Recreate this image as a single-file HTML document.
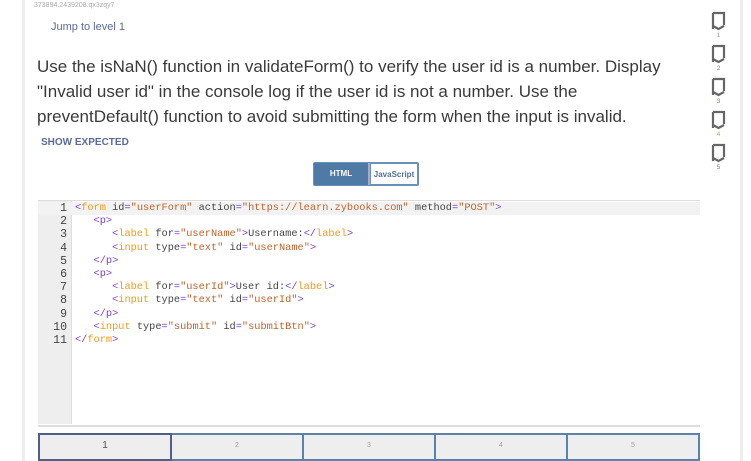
<!DOCTYPE html>
<html><head><style>
body{margin:0;width:751px;height:461px;overflow:hidden;background:#fff;font-family:"Liberation Sans",sans-serif;position:relative}
.a{position:absolute}
.code{font-family:"Liberation Mono",monospace;font-size:10.3px;white-space:pre;color:#444}
.t{color:#7a3fd1}.k{color:#f29a1a}.s{color:#c0622a}
.ln{position:absolute;left:36px;width:31px;text-align:right;font-family:"Liberation Mono",monospace;font-size:11.5px;color:#444}
</style></head><body>
<div class="a" style="left:22px;top:0;width:3px;height:461px;background:#eee"></div>
<div class="a" style="left:740px;top:0;width:3px;height:461px;background:#eee"></div>
<div class="a" style="left:34px;top:2px;font-size:7px;color:#aaa">373894.2439208.qx3zqy7</div>
<div class="a" style="left:51px;top:21px;font-size:11px;color:#5a6a9a">Jump to level 1</div>
<div class="a" style="left:37px;top:54px;font-size:17px;line-height:25px;color:#3a3a3a;width:660px">Use the isNaN() function in validateForm() to verify the user id is a number. Display "Invalid user id" in the console log if the user id is not a number. Use the preventDefault() function to avoid submitting the form when the input is invalid.</div>
<div class="a" style="left:41px;top:137px;font-size:10px;font-weight:bold;color:#5a6a9a">SHOW EXPECTED</div>
<div class="a" style="left:313px;top:162px;width:106px;height:24px;border:1px solid #6a8fb8;border-radius:2px;box-sizing:border-box;display:flex;background:#fff">
<div style="width:54px;background:#4f7aa6;color:#fff;font-size:8px;font-weight:bold;text-align:center;line-height:22px;border-right:2px solid #aac">HTML</div>
<div style="flex:1;color:#4f6f9a;font-size:8px;font-weight:bold;text-align:center;line-height:22px;border:1px solid #6a8fb8">JavaScript</div></div>
<div class="a" style="left:38px;top:200px;width:662px;height:224px;background:#fff;border-bottom:2px solid #ddd;border-top:1px solid #ddd"></div>
<div class="a" style="left:38px;top:201px;width:33px;height:223px;background:#eee;border-right:1px solid #ddd"></div>
<div class="a" style="left:38px;top:202px;width:662px;height:13px;background:#f2f2f2"></div>
<div class="a" style="top:202px;left:0">
<div class="ln" style="top:0;line-height:13.2px">1<br>2<br>3<br>4<br>5<br>6<br>7<br>8<br>9<br>10<br>11</div></div>
<div class="a code" style="left:75px;top:202px;line-height:13.2px"><span class="t">&lt;</span><span class="k">form</span> id<span class="t">=</span><span class="s">"userForm"</span> action<span class="t">=</span><span class="s">"https://learn.zybooks.com"</span> method<span class="t">=</span><span class="s">"POST"</span><span class="t">&gt;</span>
   <span class="t">&lt;p&gt;</span>
      <span class="t">&lt;</span><span class="k">label</span> for<span class="t">=</span><span class="s">"userName"</span><span class="t">&gt;</span>Username:<span class="t">&lt;/</span><span class="k">label</span><span class="t">&gt;</span>
      <span class="t">&lt;</span><span class="k">input</span> type<span class="t">=</span><span class="s">"text"</span> id<span class="t">=</span><span class="s">"userName"</span><span class="t">&gt;</span>
   <span class="t">&lt;/p&gt;</span>
   <span class="t">&lt;p&gt;</span>
      <span class="t">&lt;</span><span class="k">label</span> for<span class="t">=</span><span class="s">"userId"</span><span class="t">&gt;</span>User id:<span class="t">&lt;/</span><span class="k">label</span><span class="t">&gt;</span>
      <span class="t">&lt;</span><span class="k">input</span> type<span class="t">=</span><span class="s">"text"</span> id<span class="t">=</span><span class="s">"userId"</span><span class="t">&gt;</span>
   <span class="t">&lt;/p&gt;</span>
   <span class="t">&lt;</span><span class="k">input</span> type<span class="t">=</span><span class="s">"submit"</span> id<span class="t">=</span><span class="s">"submitBtn"</span><span class="t">&gt;</span>
<span class="t">&lt;/</span><span class="k">form</span><span class="t">&gt;</span></div>
<div class="a" style="left:38px;top:433px;width:662px;height:28px;background:#5a82ab"></div>
<div class="a" style="left:40px;top:435px;width:658px;height:24px;display:flex;gap:2px">
<div style="flex:1;background:#eee;outline:2px solid #4f5f85;text-align:center;font-size:10px;line-height:22px;color:#555">1</div>
<div style="flex:1;background:#eee;text-align:center;font-size:7px;line-height:22px;color:#a99">2</div>
<div style="flex:1;background:#eee;text-align:center;font-size:7px;line-height:22px;color:#a99">3</div>
<div style="flex:1;background:#eee;text-align:center;font-size:7px;line-height:22px;color:#a99">4</div>
<div style="flex:1;background:#eee;text-align:center;font-size:7px;line-height:22px;color:#a99">5</div></div>
<svg class="a" style="left:708px;top:10px" width="24" height="170" viewBox="0 0 24 170">
<g fill="none" stroke="#666" stroke-width="2.2">
<path d="M5 3h11v12M5 3v16 M5 16l5.5 3l5.5-3"/>
<path d="M5 36h11v12M5 36v16 M5 49l5.5 3l5.5-3"/>
<path d="M5 69h11v12M5 69v16 M5 82l5.5 3l5.5-3"/>
<path d="M5 102h11v12M5 102v16 M5 115l5.5 3l5.5-3"/>
<path d="M5 135h11v12M5 135v16 M5 148l5.5 3l5.5-3"/></g>
<g font-size="6" font-family="Liberation Sans" text-anchor="middle">
<text x="10.5" y="27" fill="#88c">1</text><text x="10.5" y="60" fill="#777">2</text><text x="10.5" y="93" fill="#c63">3</text><text x="10.5" y="126" fill="#c93">4</text><text x="10.5" y="159" fill="#777">5</text></g></svg>
</body></html>
